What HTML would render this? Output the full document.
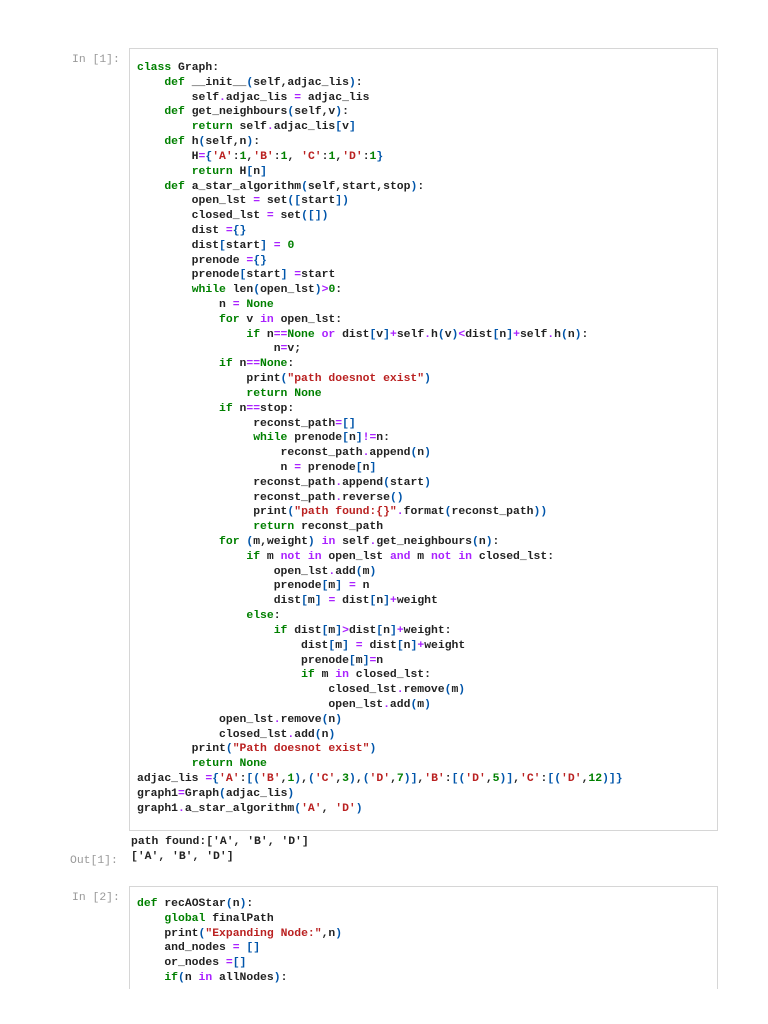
<!DOCTYPE html>
<html style="overflow:hidden;height:1024px"><head><meta charset="utf-8"><style>
body{margin:0;width:768px;height:1024px;background:#fff;position:relative;overflow:hidden;font-family:"Liberation Mono",monospace;}
pre{margin:0;font-family:"Liberation Mono",monospace;font-size:11.4px;line-height:14.82px;color:#222;font-weight:bold;position:absolute;white-space:pre;}
.box{position:absolute;border:1px solid #d6d6d6;background:#fff;}
.lbl{position:absolute;font-family:"Liberation Mono",monospace;font-size:11.4px;color:#999;}
.k{color:#008000}.o{color:#aa22ff}.s{color:#ba2121}.n{color:#008000}.p{color:#0055aa}
</style></head><body>
<div class="box" style="left:129px;top:48px;width:587px;height:781px"></div>
<div class="lbl" style="left:72px;top:54px">In [1]:</div>
<pre style="left:137px;top:61px"><span class="k">class</span> Graph:
    <span class="k">def</span> __init__<span class="p">(</span>self,adjac_lis<span class="p">)</span>:
        self<span class="o">.</span>adjac_lis <span class="o">=</span> adjac_lis
    <span class="k">def</span> get_neighbours<span class="p">(</span>self,v<span class="p">)</span>:
        <span class="k">return</span> self<span class="o">.</span>adjac_lis<span class="p">[</span>v<span class="p">]</span>
    <span class="k">def</span> h<span class="p">(</span>self,n<span class="p">)</span>:
        H<span class="o">=</span><span class="p">{</span><span class="s">'A'</span>:<span class="n">1</span>,<span class="s">'B'</span>:<span class="n">1</span>, <span class="s">'C'</span>:<span class="n">1</span>,<span class="s">'D'</span>:<span class="n">1</span><span class="p">}</span>
        <span class="k">return</span> H<span class="p">[</span>n<span class="p">]</span>
    <span class="k">def</span> a_star_algorithm<span class="p">(</span>self,start,stop<span class="p">)</span>:
        open_lst <span class="o">=</span> set<span class="p">([</span>start<span class="p">])</span>
        closed_lst <span class="o">=</span> set<span class="p">([])</span>
        dist <span class="o">=</span><span class="p">{}</span>
        dist<span class="p">[</span>start<span class="p">]</span> <span class="o">=</span> <span class="n">0</span>
        prenode <span class="o">=</span><span class="p">{}</span>
        prenode<span class="p">[</span>start<span class="p">]</span> <span class="o">=</span>start
        <span class="k">while</span> len<span class="p">(</span>open_lst<span class="p">)</span><span class="o">&gt;</span><span class="n">0</span>:
            n <span class="o">=</span> <span class="k">None</span>
            <span class="k">for</span> v <span class="o">in</span> open_lst:
                <span class="k">if</span> n<span class="o">==</span><span class="k">None</span> <span class="o">or</span> dist<span class="p">[</span>v<span class="p">]</span><span class="o">+</span>self<span class="o">.</span>h<span class="p">(</span>v<span class="p">)</span><span class="o">&lt;</span>dist<span class="p">[</span>n<span class="p">]</span><span class="o">+</span>self<span class="o">.</span>h<span class="p">(</span>n<span class="p">)</span>:
                    n<span class="o">=</span>v;
            <span class="k">if</span> n<span class="o">==</span><span class="k">None</span>:
                print<span class="p">(</span><span class="s">"path doesnot exist"</span><span class="p">)</span>
                <span class="k">return</span> <span class="k">None</span>
            <span class="k">if</span> n<span class="o">==</span>stop:
                 reconst_path<span class="o">=</span><span class="p">[]</span>
                 <span class="k">while</span> prenode<span class="p">[</span>n<span class="p">]</span><span class="o">!=</span>n:
                     reconst_path<span class="o">.</span>append<span class="p">(</span>n<span class="p">)</span>
                     n <span class="o">=</span> prenode<span class="p">[</span>n<span class="p">]</span>
                 reconst_path<span class="o">.</span>append<span class="p">(</span>start<span class="p">)</span>
                 reconst_path<span class="o">.</span>reverse<span class="p">()</span>
                 print<span class="p">(</span><span class="s">"path found:{}"</span><span class="o">.</span>format<span class="p">(</span>reconst_path<span class="p">))</span>
                 <span class="k">return</span> reconst_path
            <span class="k">for</span> <span class="p">(</span>m,weight<span class="p">)</span> <span class="o">in</span> self<span class="o">.</span>get_neighbours<span class="p">(</span>n<span class="p">)</span>:
                <span class="k">if</span> m <span class="o">not</span> <span class="o">in</span> open_lst <span class="o">and</span> m <span class="o">not</span> <span class="o">in</span> closed_lst:
                    open_lst<span class="o">.</span>add<span class="p">(</span>m<span class="p">)</span>
                    prenode<span class="p">[</span>m<span class="p">]</span> <span class="o">=</span> n
                    dist<span class="p">[</span>m<span class="p">]</span> <span class="o">=</span> dist<span class="p">[</span>n<span class="p">]</span><span class="o">+</span>weight
                <span class="k">else</span>:
                    <span class="k">if</span> dist<span class="p">[</span>m<span class="p">]</span><span class="o">&gt;</span>dist<span class="p">[</span>n<span class="p">]</span><span class="o">+</span>weight:
                        dist<span class="p">[</span>m<span class="p">]</span> <span class="o">=</span> dist<span class="p">[</span>n<span class="p">]</span><span class="o">+</span>weight
                        prenode<span class="p">[</span>m<span class="p">]</span><span class="o">=</span>n
                        <span class="k">if</span> m <span class="o">in</span> closed_lst:
                            closed_lst<span class="o">.</span>remove<span class="p">(</span>m<span class="p">)</span>
                            open_lst<span class="o">.</span>add<span class="p">(</span>m<span class="p">)</span>
            open_lst<span class="o">.</span>remove<span class="p">(</span>n<span class="p">)</span>
            closed_lst<span class="o">.</span>add<span class="p">(</span>n<span class="p">)</span>
        print<span class="p">(</span><span class="s">"Path doesnot exist"</span><span class="p">)</span>
        <span class="k">return</span> <span class="k">None</span>
adjac_lis <span class="o">=</span><span class="p">{</span><span class="s">'A'</span>:<span class="p">[(</span><span class="s">'B'</span>,<span class="n">1</span><span class="p">)</span>,<span class="p">(</span><span class="s">'C'</span>,<span class="n">3</span><span class="p">)</span>,<span class="p">(</span><span class="s">'D'</span>,<span class="n">7</span><span class="p">)]</span>,<span class="s">'B'</span>:<span class="p">[(</span><span class="s">'D'</span>,<span class="n">5</span><span class="p">)]</span>,<span class="s">'C'</span>:<span class="p">[(</span><span class="s">'D'</span>,<span class="n">12</span><span class="p">)]}</span>
graph1<span class="o">=</span>Graph<span class="p">(</span>adjac_lis<span class="p">)</span>
graph1<span class="o">.</span>a_star_algorithm<span class="p">(</span><span class="s">'A'</span>, <span class="s">'D'</span><span class="p">)</span></pre>
<pre style="left:131px;top:835px">path found:['A', 'B', 'D']
['A', 'B', 'D']</pre>
<div class="lbl" style="left:70px;top:855px">Out[1]:</div>
<div class="box" style="left:129px;top:886px;width:587px;height:102px;border-bottom:none"></div>
<div class="lbl" style="left:72px;top:892px">In [2]:</div>
<pre style="left:137px;top:897px"><span class="k">def</span> recAOStar<span class="p">(</span>n<span class="p">)</span>:
    <span class="k">global</span> finalPath
    print<span class="p">(</span><span class="s">"Expanding Node:"</span>,n<span class="p">)</span>
    and_nodes <span class="o">=</span> <span class="p">[]</span>
    or_nodes <span class="o">=</span><span class="p">[]</span>
    <span class="k">if</span><span class="p">(</span>n <span class="o">in</span> allNodes<span class="p">)</span>:</pre>
</body></html>
